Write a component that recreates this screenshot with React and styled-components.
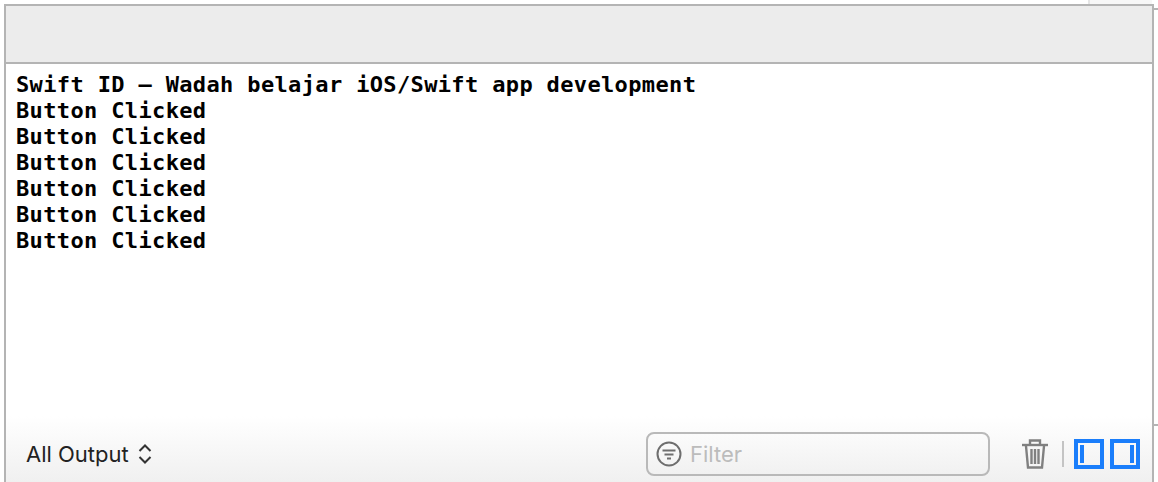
import React from 'react';
import styled, { createGlobalStyle } from 'styled-components';

const lines = [
  'Swift ID – Wadah belajar iOS/Swift app development',
  'Button Clicked',
  'Button Clicked',
  'Button Clicked',
  'Button Clicked',
  'Button Clicked',
  'Button Clicked',
];

const Global = createGlobalStyle`
  html, body {
    margin: 0;
    padding: 0;
    background: #fff;
    overflow: hidden;
  }
`
const Page = styled.div`
  width: 1158px;
  height: 482px;
  display: flex;
  flex-direction: column;
`
const TopStrip = styled.div`
  height: 4px;
  display: flex;
  justify-content: flex-end;
  padding-right: 6px;
`
const TopTab = styled.div`
  width: 62px;
  background: #f7f7f7;
  border-left: 2px solid #e6e6e6;
`
const Frame = styled.div`
  flex: 1;
  min-height: 0;
  margin: 0 4px;
  display: flex;
  flex-direction: column;
  position: relative;
  border-top: 2px solid #b4b4b4;
  border-left: 2px solid #b4b4b4;
  border-right: 2px solid #b4b4b4;
`
const SideTick = styled.div`
  position: absolute;
  top: ${props => props.top}px;
  right: -6px;
  width: 4px;
  height: 2px;
  background: #b4b4b4;
`
const Header = styled.div`
  height: 56px;
  background: #ececec;
  border-bottom: 2px solid #b4b4b4;
`
const Console = styled.div`
  flex: 1;
  padding: 8px 10px 0;
  font-family: "DejaVu Sans Mono", "Liberation Mono", monospace;
  font-size: 22px;
  font-weight: 700;
  line-height: 26px;
  letter-spacing: 0.36px;
  color: #000;
`
const Line = styled.div`
  white-space: pre;
`
const Footer = styled.div`
  height: 66px;
  flex: none;
  display: flex;
  align-items: center;
  padding: 10px 12px 0 20px;
  box-sizing: border-box;
  background: linear-gradient(#fff, #f0f0f0);
`
const Scope = styled.div`
  display: flex;
  align-items: center;
  gap: 8px;
  font-family: Inter, "Liberation Sans", sans-serif;
  font-size: 22px;
  color: #222;
`
const FilterBox = styled.div`
  width: 344px;
  height: 44px;
  box-sizing: border-box;
  margin-left: auto;
  display: flex;
  align-items: center;
  gap: 8px;
  padding-left: 8px;
  border: 2px solid #b9b9b9;
  border-radius: 8px;
  background: linear-gradient(#fbfbfb, #f1f1f1);
  font-family: Inter, "Liberation Sans", sans-serif;
  font-size: 22px;
  color: #bcbcbc;
`
const Trash = styled.svg`
  margin-left: 32px;
  flex: none;
`
const Divider = styled.div`
  width: 2px;
  height: 26px;
  margin: 0 10px 0 14px;
  background: #c4c4c4;
`
const PaneToggles = styled.div`
  display: flex;
  gap: 6px;
`
const PaneButton = styled.div`
  width: 30px;
  height: 30px;
  box-sizing: border-box;
  display: flex;
  justify-content: ${props => (props.side === 'right' ? 'flex-end' : 'flex-start')};
  padding: 2px;
  border: 4px solid #1a7efb;
`
const PaneBar = styled.div`
  width: 4px;
  height: 18px;
  background: #1a7efb;
`

const Chevrons = () => (
  <svg width="16" height="24" viewBox="0 0 16 24" fill="none" stroke="#333" strokeWidth="2">
    <path d="M2.5 9 8 3.5 13.5 9" />
    <path d="M2.5 15 8 20.5 13.5 15" />
  </svg>
);

const FilterIcon = () => (
  <svg width="26" height="26" viewBox="0 0 26 26" fill="none" stroke="#6e6e6e" strokeWidth="2">
    <circle cx="13" cy="13" r="11.5" />
    <path d="M6.5 9.5h13M8.5 13.5h9M11 17.5h4" />
  </svg>
);

const TrashIcon = () => (
  <Trash width="26" height="30" viewBox="0 0 26 30" fill="none" stroke="#808080" strokeWidth="2.4">
    <path d="M0 6h26" />
    <path d="M8 5V1.5h10V5" />
    <path d="M4 7l2 21.5h14l2-21.5" />
    <path d="M9.5 10v15M13 10v15M16.5 10v15" />
  </Trash>
);

function App() {
  return (
    <Page>
      <Global />
      <TopStrip><TopTab /></TopStrip>
      <Frame>
        <SideTick top={2} />
        <SideTick top={418} />
        <Header />
        <Console>
          {lines.map((line, i) => <Line key={i}>{line}</Line>)}
        </Console>
        <Footer>
          <Scope>All Output <Chevrons /></Scope>
          <FilterBox><FilterIcon />Filter</FilterBox>
          <TrashIcon />
          <Divider />
          <PaneToggles>
            <PaneButton side="left"><PaneBar /></PaneButton>
            <PaneButton side="right"><PaneBar /></PaneButton>
          </PaneToggles>
        </Footer>
      </Frame>
    </Page>
  );
}

export default App;
